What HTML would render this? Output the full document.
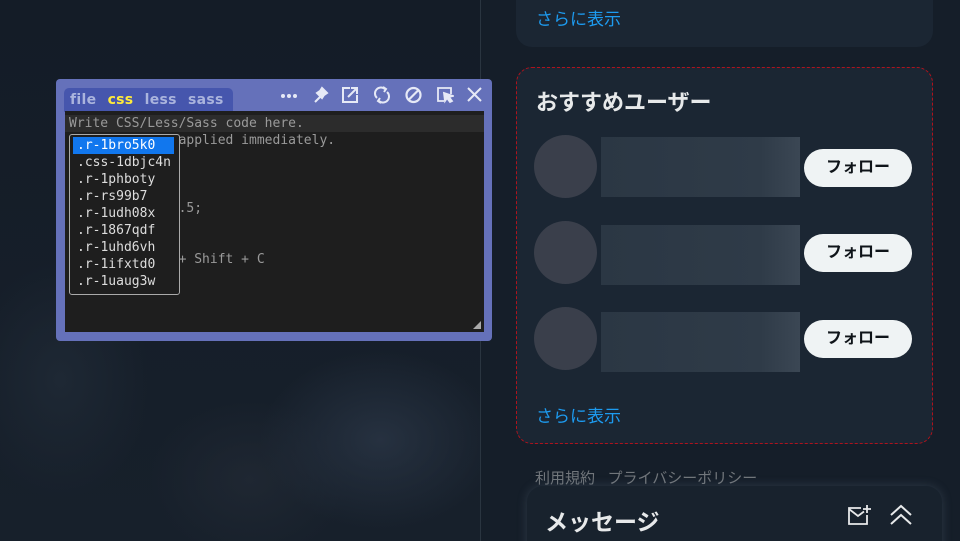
<!DOCTYPE html>
<html><head><meta charset="utf-8"><style>
*{margin:0;padding:0;box-sizing:border-box}
html,body{width:960px;height:541px;overflow:hidden}
body{background:#151e29;font-family:"Liberation Sans","Noto Sans CJK JP",sans-serif;position:relative}
.left{position:absolute;left:0;top:0;width:480px;height:541px;background:radial-gradient(ellipse 120px 90px at 380px 440px,#263140,transparent),radial-gradient(ellipse 90px 120px at 60px 380px,#1e2834,transparent),radial-gradient(ellipse 100px 80px at 250px 480px,#1f2732,transparent),linear-gradient(#141c27,#17202b)}
.vline{position:absolute;left:480px;top:0;width:1px;height:541px;background:#2a3540}
.card{position:absolute;left:516px;width:417px;background:#1b2633;border-radius:16px}
.more{color:#1d9bf0;font-size:17px}
.mono{font-family:"DejaVu Sans Mono","Liberation Mono",monospace;font-size:13px}
.ed{position:absolute;left:56px;top:79px;width:436px;height:262px;background:#6571ba;border-radius:4px}
.tabs{position:absolute;left:8px;top:9px;width:169px;height:24px;background:#4656ad;border-radius:5px 5px 0 0;color:#aab4dd;font-size:14px;font-weight:bold;padding:4px 6px;word-spacing:6px;font-family:"DejaVu Sans",sans-serif;letter-spacing:.3px}
.code{position:absolute;left:9px;top:32px;width:419px;height:221px;background:#1e1e1e;color:#9a9a9a;line-height:17px}
.dd{position:absolute;left:13px;top:55px;width:111px;height:161px;background:#1e1e1e;border:1px solid #aaa;border-radius:3px;color:#ddd;padding:2px 3px;line-height:17px}
.btn{position:absolute;left:804px;width:108px;height:38px;background:#eff3f4;border-radius:19px;color:#0f1419;font-weight:bold;font-size:16px;text-align:center;line-height:38px}
.av{position:absolute;left:534px;width:63px;height:63px;border-radius:50%;background:#3a3f4b}
.nm{position:absolute;left:601px;width:199px;height:60px;background:linear-gradient(90deg,#2b3744,#2f3b48 80%,#3b4754)}
.ic{position:absolute;top:7px}
</style></head><body>
<div class="left"></div>
<div class="vline"></div>
<div class="card" style="top:-20px;height:67px"><div class="more" style="position:absolute;left:20px;top:25px">さらに表示</div></div>
<div class="card" style="top:67px;height:377px;border:1px dashed #b0121c">
<div style="position:absolute;left:19px;top:17px;color:#e7e9ea;font-size:22px;font-weight:bold">おすすめユーザー</div>
<div class="more" style="position:absolute;left:19px;top:334px">さらに表示</div>
</div>
<div class="av" style="top:135px"></div><div class="nm" style="top:137px"></div><div class="btn" style="top:149px">フォロー</div>
<div class="av" style="top:221px"></div><div class="nm" style="top:225px"></div><div class="btn" style="top:234px">フォロー</div>
<div class="av" style="top:307px"></div><div class="nm" style="top:312px"></div><div class="btn" style="top:320px">フォロー</div>
<div style="position:absolute;left:535px;top:467px;color:#71767b;font-size:15px">利用規約&nbsp;&nbsp;&nbsp;プライバシーポリシー</div>
<div style="position:absolute;left:527px;top:486px;width:415px;height:80px;background:#18222d;border-radius:16px;box-shadow:0 0 10px rgba(120,140,160,.25)">
<div style="position:absolute;left:18px;top:17px;color:#e7e9ea;font-size:23px;font-weight:bold">メッセージ</div>
<svg style="position:absolute;left:320px;top:18px" width="26" height="24" viewBox="0 0 26 24" fill="none" stroke="#e7e9ea" stroke-width="1.8"><path d="M14 4H2v16h18V11"/><path d="M2 5l9 7 6-4.5"/><path d="M20 1v8M16 5h8"/></svg>
<svg style="position:absolute;left:362px;top:18px" width="24" height="22" viewBox="0 0 24 22" fill="none" stroke="#e7e9ea" stroke-width="2"><path d="M2 11l10-9 10 9M2 20l10-9 10 9"/></svg>
</div>
<div class="ed">
<div class="tabs">file <span style="color:#ffeb3b">css</span> less sass</div>
<svg class="ic" style="left:224px" width="18" height="18" viewBox="0 0 18 18" fill="#e6e9f6"><circle cx="3" cy="10" r="2"/><circle cx="9" cy="10" r="2"/><circle cx="15" cy="10" r="2"/></svg>
<svg class="ic" style="left:257px" width="16" height="18" viewBox="0 0 16 18" fill="none" stroke="#e6e9f6" stroke-width="2"><path d="M2 16l5-5"/><path d="M9 2l5 5-3 2-2 3-5-5 3-2z" fill="#e6e9f6"/></svg>
<svg class="ic" style="left:286px" width="16" height="18" viewBox="0 0 16 18" fill="none" stroke="#e6e9f6" stroke-width="2"><path d="M8 2H1v14h14V9"/><path d="M6 11l8-8M9 2h6v6"/></svg>
<svg class="ic" style="left:318px" width="16" height="18" viewBox="0 0 16 18" fill="none" stroke="#e6e9f6" stroke-width="2"><path d="M3 12A6 6 0 0 1 11 3M13 6a6 6 0 0 1-8 9"/><path d="M9 1l3 2-2 3M7 17l-3-2 2-3"/></svg>
<svg class="ic" style="left:349px" width="17" height="18" viewBox="0 0 17 18" fill="none" stroke="#e6e9f6" stroke-width="2.2"><circle cx="8.5" cy="9" r="7"/><path d="M3.5 14l10-10"/></svg>
<svg class="ic" style="left:381px" width="17" height="18" viewBox="0 0 17 18" fill="none" stroke="#e6e9f6" stroke-width="1.8"><path d="M7 15H1V2h13v6"/><path d="M7 7l9 3-4 1 3 4-2 1-3-4-2 3z" fill="#e6e9f6"/></svg>
<svg class="ic" style="left:411px" width="15" height="18" viewBox="0 0 15 18" fill="none" stroke="#e6e9f6" stroke-width="2"><path d="M1 2l13 13M14 2L1 15"/></svg>
<div class="code mono">
<div style="background:#2c2c2c;height:17px;margin-top:4px;padding-left:4px">Write CSS/Less/Sass code here.</div>
<div style="padding-left:4px;white-space:pre">              applied immediately.</div>
<div style="padding-left:4px;white-space:pre;margin-top:51px">              .5;</div>
<div style="padding-left:4px;white-space:pre;margin-top:34px">              + Shift + C</div>
<div style="position:absolute;right:3px;bottom:3px;width:0;height:0;border-left:8px solid transparent;border-bottom:8px solid #aaa"></div>
</div>
<div class="dd mono">
<div style="background:#1177ee;color:#fff;padding-left:4px;width:101px">.r-1bro5k0</div>
<div style="padding-left:4px">.css-1dbjc4n<br>.r-1phboty<br>.r-rs99b7<br>.r-1udh08x<br>.r-1867qdf<br>.r-1uhd6vh<br>.r-1ifxtd0<br>.r-1uaug3w</div>
</div>
</div>
</body></html>
